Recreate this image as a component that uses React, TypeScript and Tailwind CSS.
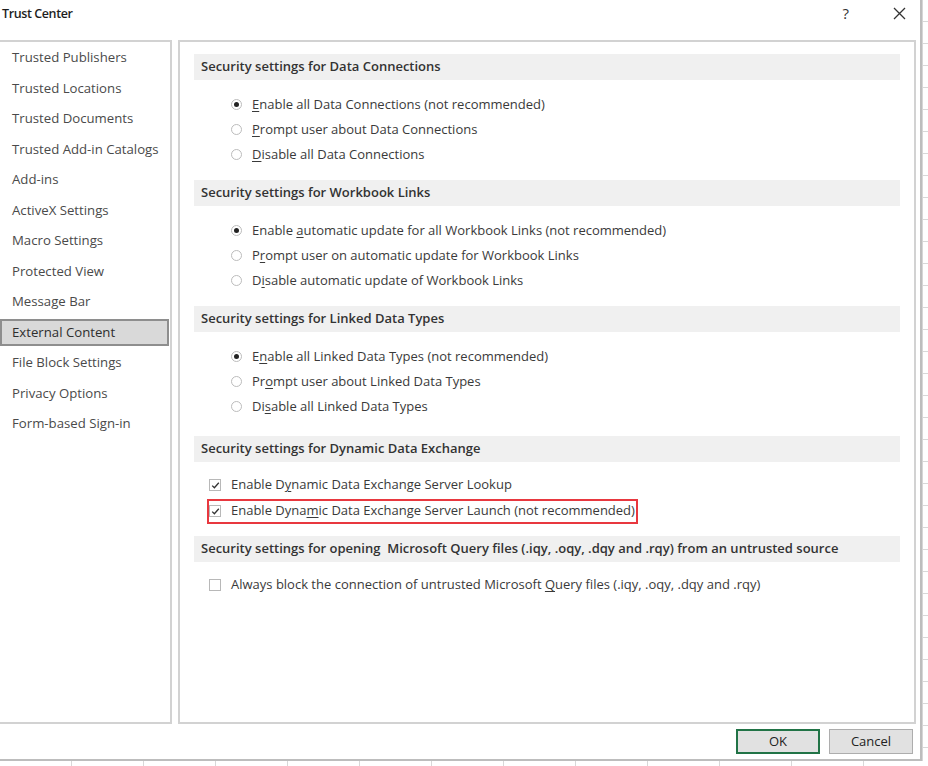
import React from "react";

const navItems = [
  "Trusted Publishers",
  "Trusted Locations",
  "Trusted Documents",
  "Trusted Add-in Catalogs",
  "Add-ins",
  "ActiveX Settings",
  "Macro Settings",
  "Protected View",
  "Message Bar",
  "External Content",
  "File Block Settings",
  "Privacy Options",
  "Form-based Sign-in",
];

function U({ children }: { children: React.ReactNode }) {
  return <span className="underline underline-offset-2 decoration-1">{children}</span>;
}

function Radio({ checked, children }: { checked?: boolean; children: React.ReactNode }) {
  return (
    <div className="h-[25px] flex items-center pl-[37px]">
      <span className="w-[11px] h-[11px] rounded-full border border-[#bcbcbc] bg-white flex items-center justify-center shrink-0">
        {checked && <span className="w-[5px] h-[5px] rounded-full bg-[#222]" />}
      </span>
      <span className="ml-[10px] text-[#3a3a3a]">{children}</span>
    </div>
  );
}

function Check({ checked }: { checked?: boolean }) {
  return (
    <span className="w-[12px] h-[12px] border border-[#b8b8b8] bg-white flex items-center justify-center shrink-0">
      {checked && (
        <svg width="9" height="9" viewBox="0 0 9 9">
          <path d="M1.2 4.6 L3.4 6.8 L7.8 1.8" fill="none" stroke="#333" strokeWidth="1.3" />
        </svg>
      )}
    </span>
  );
}

function Header({ children }: { children: React.ReactNode }) {
  return (
    <div className="h-[26px] bg-[#f0f0f0] flex items-center pl-[7px] font-semibold text-[#333] whitespace-nowrap">
      {children}
    </div>
  );
}

export default function App() {
  return (
    <div
      className="w-[928px] h-[766px] bg-white overflow-hidden flex flex-col text-[13px]"
      style={{ fontFamily: '"Open Sans", "Noto Sans", sans-serif' }}
    >
      <div className="flex h-[761px]">
        <div className="w-[922px] h-full border-r-2 border-b-2 border-[#bdbdbd] flex flex-col">
          {/* title bar */}
          <div className="h-[40px] flex items-start pt-[5px] pl-[2px] pr-[14px]">
            <span className="text-[12.5px] text-[#1e1e1e] font-semibold tracking-[-0.4px]">Trust Center</span>
            <span className="ml-auto mt-[1px] text-[15px] text-[#333] leading-none">?</span>
            <svg className="ml-[44px] mt-[2px]" width="13" height="13" viewBox="0 0 13 13">
              <path d="M1 1 L12 12 M12 1 L1 12" stroke="#333" strokeWidth="1.3" />
            </svg>
          </div>
          {/* panels */}
          <div className="flex h-[684px]">
            <div className="w-[172px] h-full border-2 border-[#d2d2d2] border-l-0 pt-[1px] text-[13.2px]">
              {navItems.map((n) => (
                <div key={n} className="h-[30.5px] flex items-center">
                  {n === "External Content" ? (
                    <div className="w-[169px] h-[27px] bg-[#d9d9d9] border-2 border-[#8e8e8e] flex items-center pl-[10px] text-[#2e2e2e]">
                      {n}
                    </div>
                  ) : (
                    <span className="pl-[12px] text-[#4a4a4a]">{n}</span>
                  )}
                </div>
              ))}
            </div>
            <div className="ml-[6px] w-[738px] h-full border-2 border-[#d2d2d2] pt-[12px] px-[14px]">
              <Header>Security settings for Data Connections</Header>
              <div className="mt-[12px] mb-[13px]">
                <Radio checked>
                  <U>E</U>nable all Data Connections (not recommended)
                </Radio>
                <Radio>
                  <U>P</U>rompt user about Data Connections
                </Radio>
                <Radio>
                  <U>D</U>isable all Data Connections
                </Radio>
              </div>
              <Header>Security settings for Workbook Links</Header>
              <div className="mt-[12px] mb-[13px]">
                <Radio checked>
                  Enable <U>a</U>utomatic update for all Workbook Links (not recommended)
                </Radio>
                <Radio>
                  P<U>r</U>ompt user on automatic update for Workbook Links
                </Radio>
                <Radio>
                  D<U>i</U>sable automatic update of Workbook Links
                </Radio>
              </div>
              <Header>Security settings for Linked Data Types</Header>
              <div className="mt-[12px] mb-[17px]">
                <Radio checked>
                  E<U>n</U>able all Linked Data Types (not recommended)
                </Radio>
                <Radio>
                  Pr<U>o</U>mpt user about Linked Data Types
                </Radio>
                <Radio>
                  Di<U>s</U>able all Linked Data Types
                </Radio>
              </div>
              <Header>Security settings for Dynamic Data Exchange</Header>
              <div className="mt-[10px] mb-[12px]">
                <div className="h-[26px] flex items-center pl-[15px]">
                  <Check checked />
                  <span className="ml-[10px] text-[#3a3a3a]">
                    Enable D<U>y</U>namic Data Exchange Server Lookup
                  </span>
                </div>
                <div className="h-[26px] flex items-center">
                  <div className="ml-[13px] h-[25px] border-2 border-[#e8383f] flex items-center pr-[1px]">
                    <Check checked />
                    <span className="ml-[10px] text-[#3a3a3a]">
                      Enable Dyna<U>m</U>ic Data Exchange Server Launch (not recommended)
                    </span>
                  </div>
                </div>
              </div>
              <Header>
                Security settings for opening&nbsp; Microsoft Query files (.iqy, .oqy, .dqy and .rqy) from an untrusted source
              </Header>
              <div className="mt-[10px]">
                <div className="h-[25px] flex items-center pl-[15px]">
                  <Check />
                  <span className="ml-[10px] text-[#3a3a3a]">
                    Always block the connection of untrusted Microsoft <U>Q</U>uery files (.iqy, .oqy, .dqy and .rqy)
                  </span>
                </div>
              </div>
            </div>
          </div>
          {/* buttons */}
          <div className="flex justify-end gap-[9px] pr-[7px] mt-[5px]">
            <button className="w-[84px] h-[25px] bg-[#e1e1e1] border-2 border-[#217346] text-[#222] text-[13px]">
              OK
            </button>
            <button className="w-[84px] h-[25px] bg-[#e1e1e1] border border-[#adadad] text-[#222] text-[13px]">
              Cancel
            </button>
          </div>
        </div>
        <div className="flex-1 h-full border-l border-[#d6d6d6] bg-[repeating-linear-gradient(to_bottom,#ffffff_0px,#ffffff_21px,#d8d8d8_21px,#d8d8d8_22px)]" />
      </div>
      <div className="flex-1 bg-[repeating-linear-gradient(to_right,#ffffff_0px,#ffffff_71px,#d8d8d8_71px,#d8d8d8_72px)]" />
    </div>
  );
}
